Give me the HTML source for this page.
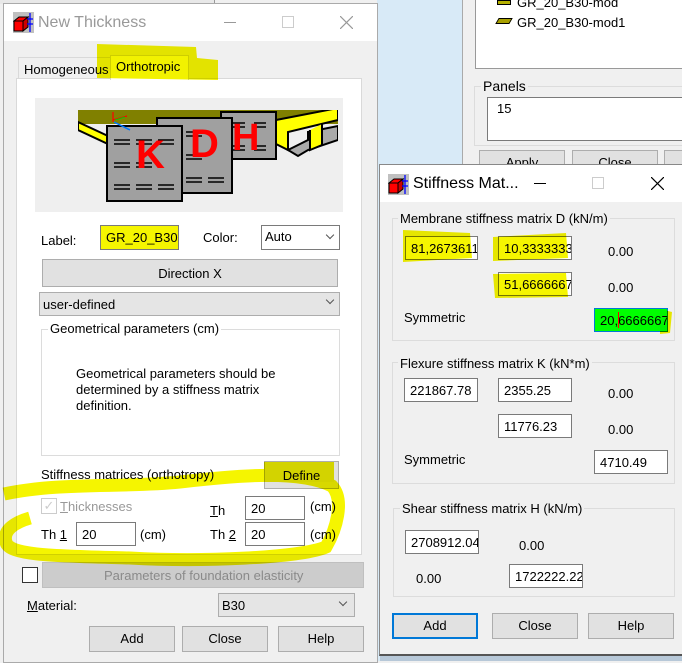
<!DOCTYPE html>
<html><head><meta charset="utf-8"><style>
*{box-sizing:border-box;margin:0;padding:0}
body{width:682px;height:661px;overflow:hidden;position:relative;background:#f0f0f0;font-family:"Liberation Sans",sans-serif;font-size:13px;color:#000}
.a{position:absolute}
.t{position:absolute;white-space:nowrap;line-height:15px}
.ed{position:absolute;background:#fff;border:1px solid #7a7a7a;padding:4px 0 0 5px;line-height:15px;overflow:hidden;white-space:nowrap}
.btn{position:absolute;background:#e1e1e1;border:1px solid #adadad;text-align:center;line-height:24px}
.grp{position:absolute;border:1px solid #dcdcdc}
.lg{position:absolute;background:#f0f0f0;padding:0 2px;line-height:15px;white-space:nowrap}
.chev{position:absolute;width:6px;height:6px;border-right:1px solid #555;border-bottom:1px solid #555;transform:rotate(45deg)}
u{text-decoration:underline}
</style></head><body>
<div class="a" style="left:0;top:0;width:215px;height:4px;background:#e8e8e8;border-right:1px solid #999"></div>
<div class="a" style="left:377px;top:0;width:86px;height:661px;background:#d8eaf7"></div>
<div class="a" style="left:462px;top:0;width:220px;height:661px;background:#f0f0f0;border-left:1px solid #aaa"></div>
<div class="a" style="left:475px;top:-2px;width:210px;height:71px;background:#fff;border:1px solid #999"></div>
<div class="a" style="left:497px;top:0;width:14px;height:5px;background:#b5b000;border:1px solid #000"></div>
<div class="t" style="left:517px;top:-5px">GR_20_B30-mod</div>
<div class="a" style="left:497px;top:18px;width:14px;height:6px;background:#a8a000;border:1px solid #000;transform:skewX(-30deg)"></div>
<div class="t" style="left:517px;top:15px">GR_20_B30-mod1</div>
<div class="grp" style="left:474px;top:86px;width:210px;height:60px"></div>
<div class="lg" style="left:481px;top:79px;font-size:14px">Panels</div>
<div class="a" style="left:487px;top:97px;width:200px;height:44px;background:#fff;border:1px solid #7a7a7a"></div>
<div class="t" style="left:497px;top:101px">15</div>
<div class="btn" style="left:479px;top:150px;width:86px;height:25px">Apply</div>
<div class="btn" style="left:572px;top:150px;width:86px;height:25px">Close</div>
<div class="btn" style="left:664px;top:150px;width:30px;height:25px"></div>

<div class="a" style="left:3px;top:3px;width:375px;height:660px;background:#f0f0f0;border:1px solid #aaa"></div>
<div class="a" style="left:4px;top:4px;width:373px;height:37px;background:#fff"></div>
<svg class="a" style="left:13px;top:12px" width="21" height="21"><rect width="21" height="21" fill="#c0c0c0"/><path d="M1 9h9v10H1z" fill="#f00" stroke="#000"/><path d="M1 9l5-4h9l-5 4z" fill="#f00" stroke="#000"/><path d="M10 9l5-4v10l-5 4z" fill="#c00" stroke="#000"/><path d="M17 1v19M14 7h6M14 12h6" stroke="#00f" stroke-width="1.3"/></svg>
<div class="t" style="left:38px;top:13px;font-size:16px;line-height:19px;color:#999">New Thickness</div>
<div class="a" style="left:224px;top:22px;width:12px;height:1px;background:#999"></div>
<div class="a" style="left:282px;top:16px;width:12px;height:12px;border:1px solid #ccc"></div>
<svg class="a" style="left:340px;top:16px" width="13" height="13"><path d="M0 0L13 13M13 0L0 13" stroke="#999" stroke-width="1.2"/></svg>

<div class="a" style="left:18px;top:57px;width:93px;height:22px;background:#f0f0f0;border:1px solid #d9d9d9"></div>
<div class="t" style="left:24px;top:62px">Homogeneous</div>
<div class="a" style="left:16px;top:78px;width:346px;height:477px;background:#fff;border:1px solid #d9d9d9"></div>
<div class="a" style="left:110px;top:55px;width:79px;height:25px;background:#fff;border:1px solid #d9d9d9;border-bottom:none"></div>
<svg class="a" style="left:0;top:0;mix-blend-mode:multiply" width="682" height="661"><path d="M97 44L196 47L197 58L218 60L218 80L97 78Z" fill="#f2f200"/></svg>
<div class="t" style="left:116px;top:59px">Orthotropic</div>

<div class="a" style="left:35px;top:98px;width:308px;height:114px;background:#efefef"></div>
<svg class="a" style="left:78px;top:110px" width="260" height="92">
<rect x="0" y="0" width="260" height="14" fill="#808000"/>
<path d="M0 12L30 26L30 34L0 20Z" fill="#ff0" stroke="#000" stroke-width="2"/>
<path d="M198 10L260 -2L260 10L210 22L210 40L198 34Z" fill="#ff0" stroke="#000" stroke-width="2"/>
<path d="M210 40L230 30L230 22L260 16L260 30L230 40L220 46Z" fill="#aaa" stroke="#000" stroke-width="2"/>
<path d="M232 20L232 40L244 35L244 14" fill="#ff0" stroke="#000" stroke-width="2"/>
<rect x="143" y="2" width="55" height="47" fill="#a0a0a0" stroke="#000" stroke-width="2"/>
<rect x="79" y="8" width="75" height="75" fill="#a0a0a0" stroke="#000" stroke-width="2"/>
<rect x="29" y="16" width="75" height="75" fill="#a0a0a0" stroke="#000" stroke-width="2"/>
<g stroke="#000" stroke-width="1.5"><path d="M36 30h16M36 34h16M58 30h16M58 34h16M80 30h16M80 34h16M36 53h16M36 57h16M58 53h16M58 57h16M36 75h16M36 79h16M58 75h16M58 79h16M80 75h16M80 79h16M108 22h16M108 26h16M108 45h16M108 49h16M108 68h16M108 72h16M130 68h16M130 72h16M155 13h12M155 17h12M176 13h12M176 17h12M155 36h12M155 40h12M176 36h12M176 40h12"/></g>
<path d="M35 2v10M35 10l14-4" stroke="#f00" stroke-width="1.2"/><path d="M37 10l10-3" stroke="#0c0"/><path d="M36 12l16 8" stroke="#07f" stroke-width="1.5"/>
<text x="58" y="58" font-family="Liberation Sans" font-weight="bold" font-size="40" fill="#f00">K</text>
<text x="112" y="47" font-family="Liberation Sans" font-weight="bold" font-size="40" fill="#f00">D</text>
<text x="154" y="40" font-family="Liberation Sans" font-weight="bold" font-size="38" fill="#f00">H</text>
</svg>

<div class="t" style="left:41px;top:233px">Label:</div>
<div class="ed" style="left:100px;top:225px;width:79px;height:25px;background:#f5f500;padding-top:4px">GR_20_B30-</div>
<div class="t" style="left:203px;top:230px">Color:</div>
<div class="ed" style="left:261px;top:225px;width:79px;height:25px;padding:3px 0 0 3px">Auto</div>
<div class="chev" style="left:327px;top:232px"></div>
<div class="btn" style="left:42px;top:259px;width:296px;height:28px;line-height:27px">Direction X</div>
<div class="a" style="left:39px;top:292px;width:301px;height:24px;background:#e5e5e5;border:1px solid #adadad"></div>
<div class="t" style="left:43px;top:297px">user-defined</div>
<div class="chev" style="left:327px;top:297px"></div>
<div class="a" style="left:41px;top:329px;width:299px;height:127px;border:1px solid #dcdcdc"></div>
<div class="lg" style="left:48px;top:321px;background:#fff">Geometrical parameters (cm)</div>
<div class="t" style="left:76px;top:366px;line-height:16px">Geometrical parameters should be<br>determined by a stiffness matrix<br>definition.</div>

<div class="t" style="left:41px;top:467px">Stiffness matrices (orthotropy)</div>
<div class="btn" style="left:264px;top:461px;width:75px;height:28px;line-height:27px">Define</div>
<div class="a" style="left:41px;top:498px;width:16px;height:16px;border:1px solid #ccc;color:#ccc;font-size:13px;line-height:14px;text-align:center">✓</div>
<div class="t" style="left:60px;top:499px;color:#999"><u>T</u>hicknesses</div>
<div class="t" style="left:210px;top:503px"><u>T</u>h</div>
<div class="ed" style="left:245px;top:496px;width:60px;height:24px">20</div>
<div class="t" style="left:310px;top:499px">(cm)</div>
<div class="t" style="left:41px;top:527px">Th <u>1</u></div>
<div class="ed" style="left:76px;top:522px;width:60px;height:24px">20</div>
<div class="t" style="left:140px;top:527px">(cm)</div>
<div class="t" style="left:210px;top:527px">Th <u>2</u></div>
<div class="ed" style="left:245px;top:522px;width:60px;height:24px">20</div>
<div class="t" style="left:310px;top:527px">(cm)</div>

<div class="a" style="left:22px;top:567px;width:16px;height:16px;background:#fff;border:1px solid #333"></div>
<div class="a" style="left:42px;top:562px;width:322px;height:26px;background:#cccccc;border:1px solid #bfbfbf"></div>
<div class="t" style="left:104px;top:568px;color:#8a8a8a">Parameters of foundation elasticity</div>
<svg class="a" style="left:0;top:0;mix-blend-mode:multiply" width="682" height="661"><path d="M4 494C60 482 120 488 180 482C240 475 300 470 332 486C345 500 336 530 326 547C300 558 200 562 130 558C60 556 8 556 6 542C2 530 16 522 30 518" fill="none" stroke="#f5f500" stroke-width="13"/><path d="M264 462h70v20h-70z" fill="#f0f000"/></svg>
<div class="t" style="left:27px;top:598px"><u>M</u>aterial:</div>
<div class="a" style="left:218px;top:593px;width:137px;height:24px;background:#e5e5e5;border:1px solid #adadad"></div>
<div class="t" style="left:222px;top:598px">B30</div>
<div class="chev" style="left:340px;top:599px"></div>
<div class="btn" style="left:89px;top:626px;width:86px;height:26px">Add</div>
<div class="btn" style="left:182px;top:626px;width:86px;height:26px">Close</div>
<div class="btn" style="left:278px;top:626px;width:86px;height:26px">Help</div>

<div class="a" style="left:379px;top:164px;width:304px;height:492px;background:#f0f0f0;border:1px solid #888;border-bottom:2px solid #555"></div>
<div class="a" style="left:380px;top:165px;width:302px;height:37px;background:#fff"></div>
<div class="a" style="left:380px;top:656px;width:302px;height:5px;background:#b7c8d8"></div>
<svg class="a" style="left:388px;top:174px" width="21" height="21"><rect width="21" height="21" fill="#c0c0c0"/><path d="M1 9h9v10H1z" fill="#f00" stroke="#000"/><path d="M1 9l5-4h9l-5 4z" fill="#f00" stroke="#000"/><path d="M10 9l5-4v10l-5 4z" fill="#c00" stroke="#000"/><path d="M17 1v19M14 7h6M14 12h6" stroke="#00f" stroke-width="1.3"/></svg>
<div class="t" style="left:413px;top:174px;font-size:16px;line-height:19px">Stiffness Mat...</div>
<div class="a" style="left:534px;top:183px;width:12px;height:1px;background:#000"></div>
<div class="a" style="left:592px;top:177px;width:12px;height:12px;border:1px solid #ccc"></div>
<svg class="a" style="left:651px;top:177px" width="13" height="13"><path d="M0 0L13 13M13 0L0 13" stroke="#000" stroke-width="1.2"/></svg>

<div class="grp" style="left:392px;top:218px;width:283px;height:123px"></div>
<div class="lg" style="left:398px;top:211px">Membrane stiffness matrix D (kN/m)</div>
<div class="ed" style="left:405px;top:236px;width:73px;height:24px">81,2673611</div>
<div class="ed" style="left:498px;top:236px;width:74px;height:24px">10,3333333</div>
<div class="t" style="left:608px;top:244px">0.00</div>
<div class="ed" style="left:498px;top:272px;width:74px;height:24px">51,6666667</div>
<div class="t" style="left:608px;top:280px">0.00</div>
<div class="t" style="left:404px;top:310px">Symmetric</div>
<div class="ed" style="left:594px;top:308px;width:74px;height:24px;background:#0f0;border-color:#0078d7;padding-left:5px">20,6666667</div>
<svg class="a" style="left:0;top:0;mix-blend-mode:multiply" width="682" height="661"><path d="M403 230L470 233L472 258L403 262Z" fill="#f5f500"/><path d="M493 237L566 233L568 258L493 261Z" fill="#f5f500"/><path d="M493 274L566 273L568 297L495 298Z" fill="#f5f500"/><path d="M660 309L672 312L670 333L660 334Z" fill="#f5f500"/></svg>
<div class="a" style="left:618px;top:312px;width:1px;height:16px;background:#f00"></div>

<div class="grp" style="left:392px;top:362px;width:283px;height:122px"></div>
<div class="lg" style="left:398px;top:356px">Flexure stiffness matrix K (kN*m)</div>
<div class="ed" style="left:404px;top:378px;width:74px;height:24px">221867.78</div>
<div class="ed" style="left:498px;top:378px;width:74px;height:24px">2355.25</div>
<div class="t" style="left:608px;top:386px">0.00</div>
<div class="ed" style="left:498px;top:414px;width:74px;height:24px">11776.23</div>
<div class="t" style="left:608px;top:422px">0.00</div>
<div class="t" style="left:404px;top:452px">Symmetric</div>
<div class="ed" style="left:594px;top:450px;width:74px;height:24px">4710.49</div>

<div class="grp" style="left:393px;top:508px;width:282px;height:89px"></div>
<div class="lg" style="left:400px;top:501px">Shear stiffness matrix H (kN/m)</div>
<div class="ed" style="left:405px;top:530px;width:74px;height:24px">2708912.04</div>
<div class="t" style="left:519px;top:538px">0.00</div>
<div class="t" style="left:416px;top:571px">0.00</div>
<div class="ed" style="left:509px;top:564px;width:74px;height:24px">1722222.22</div>

<div class="btn" style="left:392px;top:613px;width:86px;height:26px;border:2px solid #0078d7;line-height:22px">Add</div>
<div class="btn" style="left:492px;top:613px;width:86px;height:26px">Close</div>
<div class="btn" style="left:588px;top:613px;width:86px;height:26px">Help</div>
</body></html>
